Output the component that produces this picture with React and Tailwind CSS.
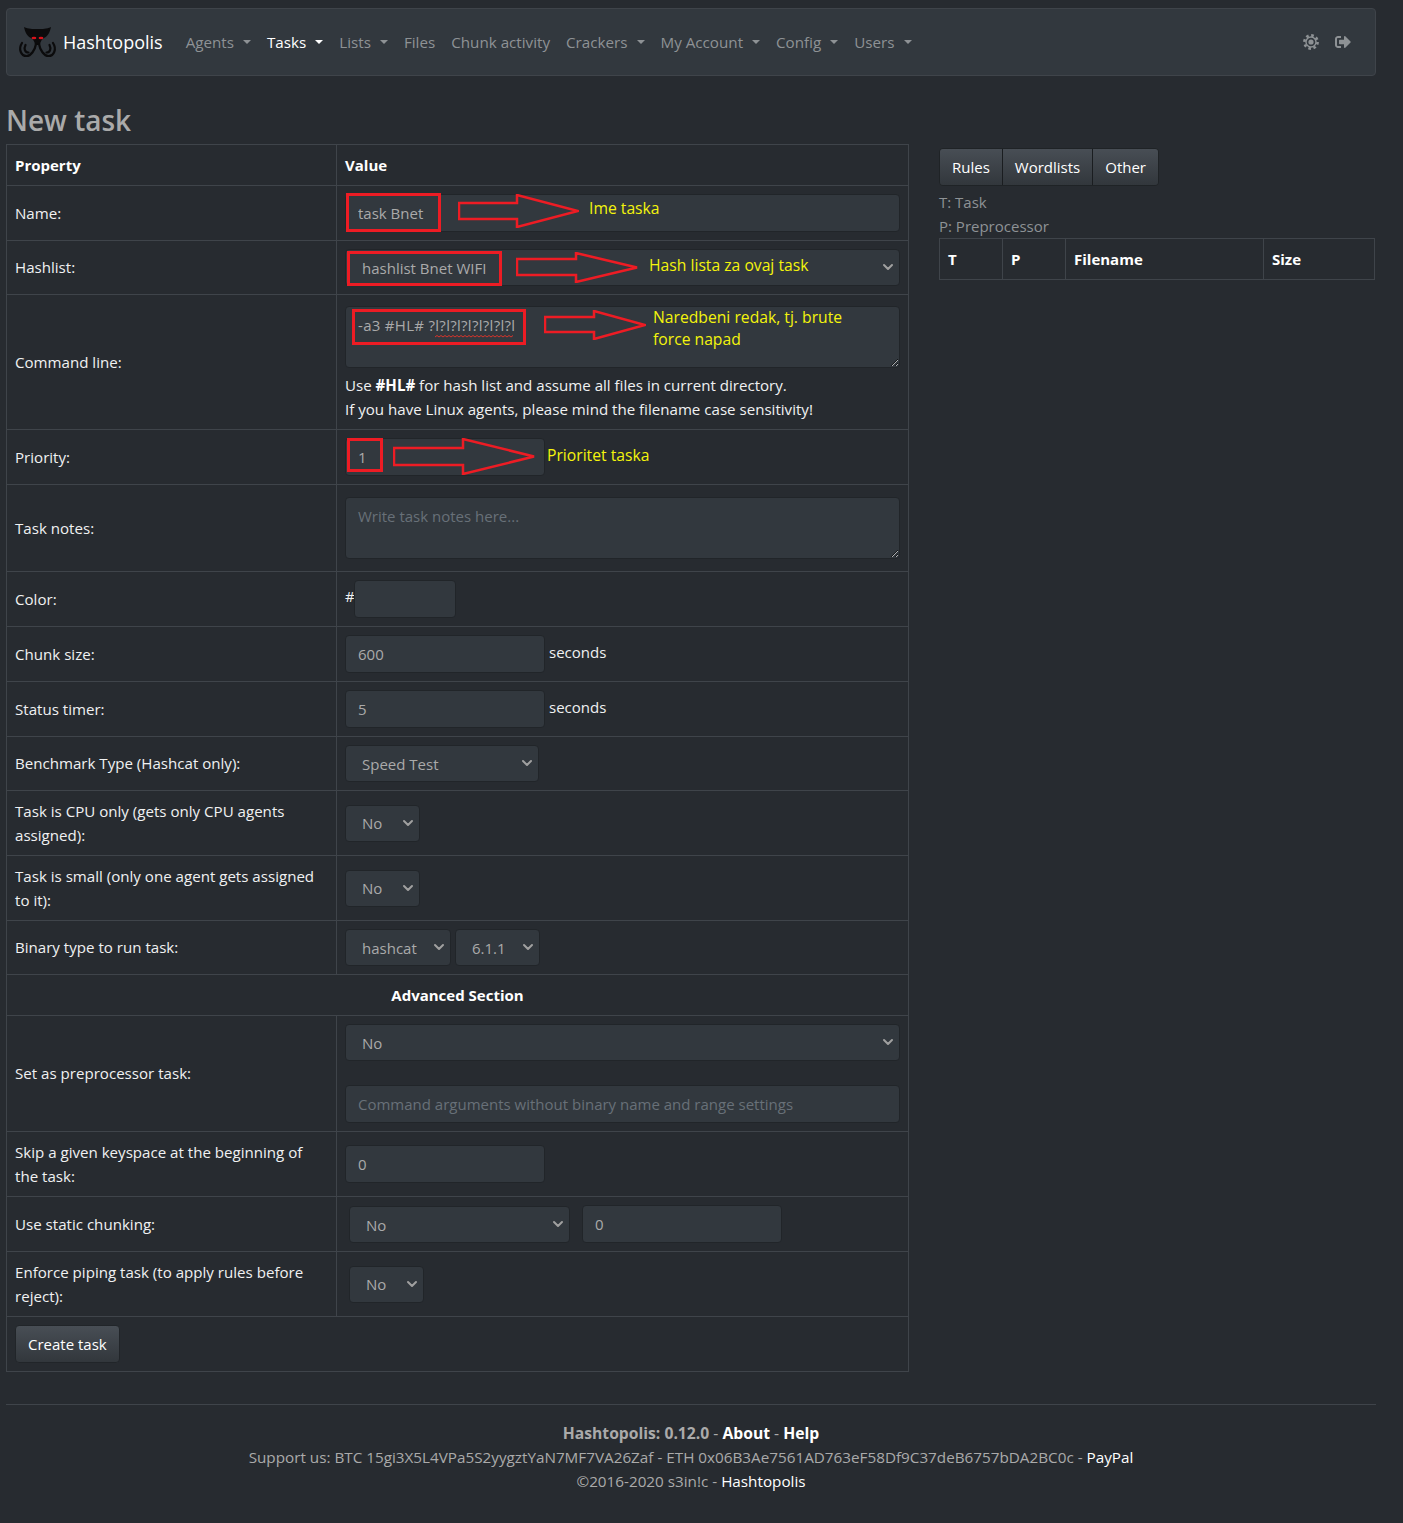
import React from "react";
import { FaSignOutAlt } from "react-icons/fa";

const inputClass =
  "block h-[38px] rounded border border-[#212529] bg-[#32383e] px-[12px] text-[#aaaaaa] placeholder:text-[#687078] outline-none";

function Chevron() {
  return (
    <svg viewBox="0 0 12 12" className="pointer-events-none absolute right-[6px] top-[12px] h-[12px] w-[12px]">
      <path d="M2 4l4 4 4-4" fill="none" stroke="#a0a0a0" strokeWidth="2" strokeLinecap="round" strokeLinejoin="round" />
    </svg>
  );
}

function Select({ value, className = "" }) {
  return (
    <div className={`relative inline-block h-[37px] ${className}`}>
      <select
        defaultValue={value}
        className="block h-[37px] w-full appearance-none rounded border border-[#212529] bg-[#32383e] pl-[16px] pr-[20px] text-[#aaaaaa] outline-none"
      >
        <option>{value}</option>
      </select>
      <Chevron />
    </div>
  );
}

// red box drawn over a field in the screenshot
function RedBox({ className }) {
  return <div className={`pointer-events-none absolute border-[3px] border-[#ed1c24] ${className}`} />;
}

// hollow red arrow, w/h are the arrow's box, base is where the head starts
function Arrow({ className, w, h, base, t1, t2 }) {
  const points = `1,${t1} ${base},${t1} ${base},1 ${w - 1},${h / 2} ${base},${h - 1} ${base},${t2} 1,${t2}`;
  return (
    <svg width={w} height={h} className={`pointer-events-none absolute ${className}`}>
      <polygon points={points} fill="none" stroke="#ed1c24" strokeWidth="2.5" />
    </svg>
  );
}

function Note({ className, children }) {
  return <div className={`absolute text-[15.7px] text-[#f4f40c] ${className}`}>{children}</div>;
}

function Row({ label, children, className = "", nudge }) {
  return (
    <tr className={className}>
      <td className={`border border-[#3f444a] px-2 align-middle text-[15.1px] text-[#f0f1f2] ${nudge ? "pb-[2px]" : ""}`}>
        {label}
      </td>
      <td className="border border-[#3f444a] px-2 align-middle">{children}</td>
    </tr>
  );
}

function NavItem({ children, caret, active }) {
  return (
    <div className={`flex h-6 items-center px-2 text-[15.2px] ${active ? "text-white" : "text-[#8e9295]"}`}>
      {children}
      {caret && (
        <span className="ml-[9px] h-0 w-0 border-x-[4.5px] border-t-[4.5px] border-x-transparent border-t-current" />
      )}
    </div>
  );
}

function Logo() {
  return (
    <svg viewBox="0 0 40 32" className="h-[32px] w-[40px] overflow-visible">
      <path d="M5 1C10 3 13 3 18.5 3S27 3 32 1C31 6 29 10 25 12 23 13 21.5 15 21 19L16 19C15.5 15 14 13 12 12 8 10 6 6 5 1Z" fill="#0b0b0c" />
      <g fill="none" stroke="#0b0b0c" strokeWidth="2.2" strokeLinecap="round">
        <path d="M17 18C16 24 12 30 7.5 30 2 30-1 23 3 17" />
        <path d="M6.5 19C4.5 23 6 26.5 9.5 26.5" />
        <path d="M20 18C21 24 25 30 29.5 30 35 30 38 23 34 17" />
        <path d="M30.5 19C32.5 23 31 26.5 27.5 26.5" />
      </g>
      <ellipse cx="15" cy="12" rx="2.4" ry="1.3" fill="#d8121a" />
      <ellipse cx="22" cy="12" rx="2.4" ry="1.3" fill="#d8121a" />
    </svg>
  );
}

function Gear() {
  return (
    <svg viewBox="0 0 16 16" className="h-4 w-4" fill="none" stroke="currentColor">
      <circle cx="8" cy="8" r="6.6" strokeWidth="2.6" strokeDasharray="2.6 2.58" />
      <circle cx="8" cy="8" r="5" strokeWidth="1.4" />
      <circle cx="8" cy="8" r="2.6" fill="currentColor" stroke="none" />
    </svg>
  );
}

export default function App() {
  return (
    <div className="min-h-[1523px] w-[1403px] bg-[#272b30] font-['Open_Sans',sans-serif] text-[15px] leading-6 text-[#aaaaaa]">
      <div className="ml-[6px] w-[1370px] pt-2">
        {/* Navbar */}
        <nav className="flex h-[68px] items-center rounded border border-[#3f444a] bg-[#32383e] pl-[12px] pr-[24px]">
          <Logo />
          <span className="ml-[4px] mr-[15px] text-[18px] text-white">Hashtopolis</span>
          <NavItem caret>Agents</NavItem>
          <NavItem caret active>Tasks</NavItem>
          <NavItem caret>Lists</NavItem>
          <NavItem>Files</NavItem>
          <NavItem>Chunk activity</NavItem>
          <NavItem caret>Crackers</NavItem>
          <NavItem caret>My Account</NavItem>
          <NavItem caret>Config</NavItem>
          <NavItem caret>Users</NavItem>
          <div className="ml-auto flex items-center gap-4 text-[#8e9295]">
            <Gear />
            <FaSignOutAlt className="h-4 w-4" />
          </div>
        </nav>

        <h1 className="mt-[25px] h-[43px] text-[28px] font-semibold leading-[38px] text-[#aaaaaa]">New task</h1>

        <div className="flex items-start">
          {/* Task form */}
          <table className="w-[903px] table-fixed border-collapse">
            <colgroup>
              <col className="w-[330px]" />
              <col />
            </colgroup>
            <tbody>
              <tr className="h-[41px] font-bold text-white">
                <td className="border border-[#3f444a] px-2">Property</td>
                <td className="border border-[#3f444a] px-2">Value</td>
              </tr>
              <Row label="Name:" className="h-[55px]">
                <div className="relative">
                  <input readOnly defaultValue="task Bnet" className={`${inputClass} w-full`} />
                  <RedBox className="left-[1px] top-[-1px] h-[39px] w-[95px]" />
                  <Arrow className="left-[113px] top-0" w={121} h={34} base={59} t1={9} t2={25} />
                  <Note className="left-[244px] top-[2px]">Ime taska</Note>
                </div>
              </Row>
              <Row label="Hashlist:" className="h-[54px]" nudge>
                <div className="relative">
                  <Select value="hashlist Bnet WIFI" className="w-full align-top" />
                  <RedBox className="left-[2px] top-[2px] h-[35px] w-[155px]" />
                  <Arrow className="left-[171px] top-[3px]" w={122} h={31} base={60} t1={7} t2={23} />
                  <Note className="left-[304px] top-[4px]">Hash lista za ovaj task</Note>
                </div>
              </Row>
              <Row label="Command line:" className="h-[135px]">
                <div className="relative pb-[3px] pt-[5px]">
                  <textarea
                    readOnly
                    spellCheck={false}
                    defaultValue="-a3 #HL# ?l?l?l?l?l?l?l?l"
                    className={`${inputClass} h-[62px] w-full resize-y py-[6px] tracking-[0.3px]`}
                  />
                  <RedBox className="left-[7px] top-[8px] h-[36px] w-[174px]" />
                  <svg width="81" height="3" className="pointer-events-none absolute left-[90px] top-[34px]">
                    <path
                      d="M0 2l2-1.5 2 1.5 2-1.5 2 1.5 2-1.5 2 1.5 2-1.5 2 1.5 2-1.5 2 1.5 2-1.5 2 1.5 2-1.5 2 1.5 2-1.5 2 1.5 2-1.5 2 1.5 2-1.5 2 1.5 2-1.5 2 1.5 2-1.5 2 1.5 2-1.5 2 1.5 2-1.5 2 1.5 2-1.5 2 1.5 2-1.5 2 1.5 2-1.5 2 1.5 2-1.5 2 1.5 2-1.5 2 1.5 2-1.5"
                      fill="none"
                      stroke="#d8342c"
                      strokeWidth="1"
                    />
                  </svg>
                  <Arrow className="left-[199px] top-[9px]" w={102} h={30} base={50} t1={7} t2={22} />
                  <Note className="left-[308px] top-[5px] leading-[22px]">
                    Naredbeni redak, tj. brute
                    <br />
                    force napad
                  </Note>
                  <div className="mt-[5px] text-[15.1px] text-[#f0f1f2]">
                    Use <b className="text-white">#HL#</b> for hash list and assume all files in current directory.
                    <br />
                    If you have Linux agents, please mind the filename case sensitivity!
                  </div>
                </div>
              </Row>
              <Row label="Priority:" className="h-[55px]">
                <div className="relative">
                  <input readOnly defaultValue="1" className={`${inputClass} w-[200px]`} />
                  <RedBox className="left-[2px] top-[0px] h-[34px] w-[36px]" />
                  <Arrow className="left-[48px] top-0" w={142} h={37} base={70} t1={10} t2={27} />
                  <Note className="left-[202px] top-[5px]">Prioritet taska</Note>
                </div>
              </Row>
              <Row label="Task notes:" className="h-[87px]">
                <textarea
                  readOnly
                  placeholder="Write task notes here..."
                  className={`${inputClass} h-[62px] w-full resize-y py-[6px]`}
                />
              </Row>
              <Row label="Color:" className="h-[55px]">
                <div className="flex items-start">
                  <span className="mt-[4px] w-[9px] text-[#f0f1f2]">#</span>
                  <input readOnly className={`${inputClass} w-[102px]`} />
                </div>
              </Row>
              <Row label="Chunk size:" className="h-[55px]">
                <div className="flex items-start">
                  <input readOnly defaultValue="600" className={`${inputClass} w-[200px]`} />
                  <span className="ml-[4px] mt-[5px] text-[#f0f1f2]">seconds</span>
                </div>
              </Row>
              <Row label="Status timer:" className="h-[55px]">
                <div className="flex items-start">
                  <input readOnly defaultValue="5" className={`${inputClass} w-[200px]`} />
                  <span className="ml-[4px] mt-[5px] text-[#f0f1f2]">seconds</span>
                </div>
              </Row>
              <Row label="Benchmark Type (Hashcat only):" className="h-[54px]" nudge>
                <Select value="Speed Test" className="w-[194px] align-top" />
              </Row>
              <Row label="Task is CPU only (gets only CPU agents assigned):" className="h-[65px]">
                <Select value="No" className="w-[75px] align-top" />
              </Row>
              <Row label="Task is small (only one agent gets assigned to it):" className="h-[65px]">
                <Select value="No" className="w-[75px] align-top" />
              </Row>
              <Row label="Binary type to run task:" className="h-[54px]" nudge>
                <div className="flex gap-[4px]">
                  <Select value="hashcat" className="w-[106px]" />
                  <Select value="6.1.1" className="w-[85px]" />
                </div>
              </Row>
              <tr className="h-[41px]">
                <td colSpan={2} className="border border-[#3f444a] px-2 text-center font-bold text-white">
                  Advanced Section
                </td>
              </tr>
              <Row label="Set as preprocessor task:" className="h-[116px]" nudge>
                <Select value="No" className="w-full align-top" />
                <input
                  readOnly
                  placeholder="Command arguments without binary name and range settings"
                  className={`${inputClass} mt-[24px] w-full`}
                />
              </Row>
              <Row
                label={
                  <>
                    Skip a given keyspace at the beginning of
                    <br />
                    the task:
                  </>
                }
                className="h-[65px]"
              >
                <input readOnly defaultValue="0" className={`${inputClass} w-[200px]`} />
              </Row>
              <Row label="Use static chunking:" className="h-[55px]">
                <div className="flex items-end pl-[4px]">
                  <Select value="No" className="w-[221px]" />
                  <input readOnly defaultValue="0" className={`${inputClass} ml-[12px] w-[200px]`} />
                </div>
              </Row>
              <Row label="Enforce piping task (to apply rules before reject):" className="h-[65px]">
                <div className="pl-[4px]">
                  <Select value="No" className="w-[75px] align-top" />
                </div>
              </Row>
              <tr className="h-[55px]">
                <td colSpan={2} className="border border-[#3f444a] px-2">
                  <button className="h-[38px] rounded border border-[#212529] bg-gradient-to-b from-[#484e55] to-[#32373c] px-[12px] text-white">
                    Create task
                  </button>
                </td>
              </tr>
            </tbody>
          </table>

          {/* Preconfigured files */}
          <div className="ml-[30px] w-[436px]">
            <div className="mt-[4px] flex h-[38px] w-fit overflow-hidden rounded border border-[#1f2326] text-white">
              <div className="flex items-center bg-gradient-to-b from-[#484e55] to-[#32373c] px-[12px]">Rules</div>
              <div className="flex items-center border-l border-[#1a1d20] bg-gradient-to-b from-[#484e55] to-[#32373c] px-[12px]">
                Wordlists
              </div>
              <div className="flex items-center border-l border-[#1a1d20] bg-gradient-to-b from-[#484e55] to-[#32373c] px-[12px]">
                Other
              </div>
            </div>
            <div className="mt-[4px] text-[#8e9295]">T: Task</div>
            <div className="text-[#8e9295]">P: Preprocessor</div>
            <table className="w-[436px] table-fixed border-collapse font-bold text-white">
              <colgroup>
                <col className="w-[63px]" />
                <col className="w-[63px]" />
                <col className="w-[198px]" />
                <col />
              </colgroup>
              <tbody>
                <tr className="h-[41px]">
                  <td className="border border-[#3f444a] px-2">T</td>
                  <td className="border border-[#3f444a] px-2">P</td>
                  <td className="border border-[#3f444a] px-2">Filename</td>
                  <td className="border border-[#3f444a] px-2">Size</td>
                </tr>
              </tbody>
            </table>
          </div>
        </div>

        {/* Footer */}
        <footer className="mt-[32px] border-t border-[#3f444a] pt-[16px] text-center text-[15.25px]">
          <div className="text-[15.7px]">
            <b>Hashtopolis: 0.12.0</b> - <b className="text-white">About</b> - <b className="text-white">Help</b>
          </div>
          <div>
            Support us: BTC 15gi3X5L4VPa5S2yygztYaN7MF7VA26Zaf - ETH 0x06B3Ae7561AD763eF58Df9C37deB6757bDA2BC0c -{" "}
            <span className="text-white">PayPal</span>
          </div>
          <div>
            ©2016-2020 s3in!c - <span className="text-white">Hashtopolis</span>
          </div>
        </footer>
      </div>
    </div>
  );
}
